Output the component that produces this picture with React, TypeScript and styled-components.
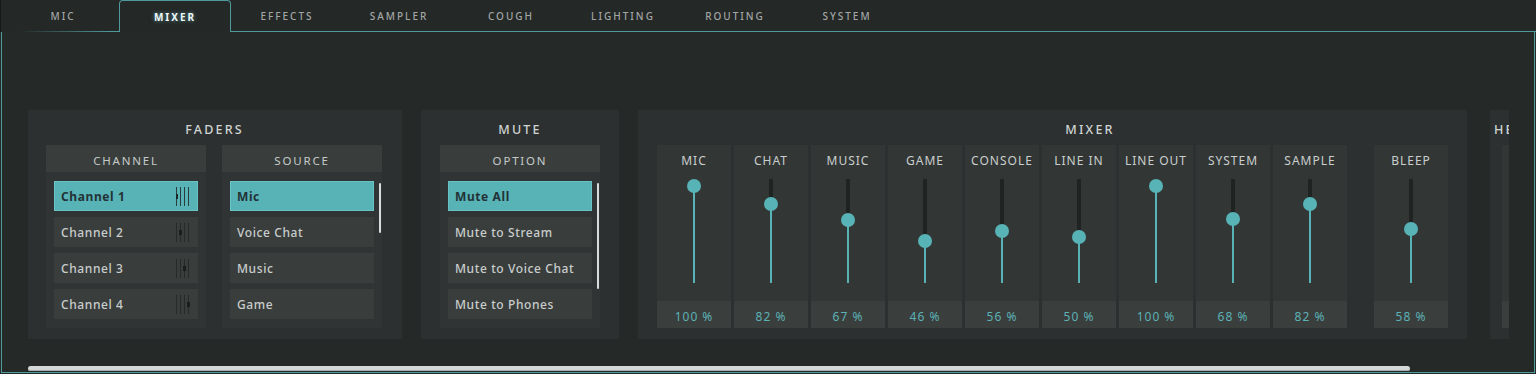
import React from "react";
import styled, { createGlobalStyle, css } from "styled-components";

const TEAL = "#58b3b7";
const LINE = "#4f9a9c";

const GlobalStyle = createGlobalStyle`
  html, body {
    margin: 0;
    padding: 0;
    background: #252928;
  }
  body {
    font-family: "Noto Sans", "DejaVu Sans", sans-serif;
  }
`;

const Root = styled.div`
  width: 1536px;
  height: 374px;
  overflow: hidden;
  background: #252928;
`;

const TabBar = styled.div`
  display: flex;
  height: 32px;
  padding-left: 6px;
  box-sizing: border-box;
  border-left: 1px solid #171a19;
  background: #242827;
`;

const Tab = styled.div<{ $active?: boolean; $fade?: boolean }>`
  width: 112px;
  height: 32px;
  box-sizing: border-box;
  display: flex;
  align-items: center;
  justify-content: center;
  padding-top: 1px;
  font-size: 10px;
  letter-spacing: 2px;
  font-weight: 500;
  color: #a2a6a5;
  border-bottom: 1px solid ${LINE};

  ${(p) =>
    p.$fade &&
    css`
      border-bottom: none;
      padding-bottom: 1px;
      background: linear-gradient(to right, transparent 10%, ${LINE} 95%) bottom / 100% 1px no-repeat;
    `}

  ${(p) =>
    p.$active &&
    css`
      border: 1px solid ${LINE};
      border-bottom: none;
      padding-bottom: 1px;
      border-radius: 4px 4px 0 0;
      color: #eef8f8;
      font-weight: 700;
      text-shadow: 0 0 4px rgba(130, 225, 230, 0.55);
    `}
`;

const TabFiller = styled.div`
  flex: 1;
  border-bottom: 1px solid ${LINE};
`;

const Frame = styled.div`
  margin-left: 1px;
  width: 1534px;
  height: 341px;
  box-sizing: border-box;
  border: 1px solid ${LINE};
  border-top: none;
  padding: 78px 0 0 26px;
`;

const Viewport = styled.div`
  width: 1481px;
  overflow: hidden;
`;

const PanelRow = styled.div`
  display: flex;
  gap: 19px;
  width: max-content;
`;

const Panel = styled.section<{ $width?: number; $offset?: number; $padLeft?: number }>`
  width: ${(p) => (p.$width ? `${p.$width}px` : "auto")};
  height: 229px;
  box-sizing: border-box;
  margin-left: ${(p) => p.$offset ?? 0}px;
  padding: 0 19px 11px ${(p) => p.$padLeft ?? 18}px;
  background: #2c3030;
  display: flex;
  flex-direction: column;
`;

const PanelTitle = styled.div<{ $shift?: number; $left?: boolean }>`
  height: 35px;
  box-sizing: border-box;
  padding-top: 4px;
  padding-left: ${(p) => p.$shift ?? 0}px;
  display: flex;
  align-items: center;
  justify-content: ${(p) => (p.$left ? "flex-start" : "center")};
  font-size: 12.5px;
  letter-spacing: 2.2px;
  font-weight: 500;
  color: #d0d4d3;
  white-space: nowrap;
`;

const Columns = styled.div`
  display: flex;
  gap: 16px;
`;

const Column = styled.div`
  width: 160px;
  height: 183px;
  display: flex;
  flex-direction: column;
`;

const ColumnHeader = styled.div`
  height: 27px;
  box-sizing: border-box;
  padding-top: 3px;
  flex-shrink: 0;
  background: #393e3d;
  display: flex;
  align-items: center;
  justify-content: center;
  font-size: 11.5px;
  letter-spacing: 1.8px;
  color: #c6cac9;
`;

const ColumnBody = styled.div`
  position: relative;
  flex: 1;
  padding: 9px 8px;
  background: #303434;
`;

const ListView = styled.div`
  height: 138px;
  overflow: hidden;
  display: flex;
  flex-direction: column;
  gap: 6px;
`;

const Item = styled.div<{ $selected?: boolean }>`
  height: 30px;
  flex-shrink: 0;
  box-sizing: border-box;
  padding: 1px 8px 0 7px;
  display: flex;
  align-items: center;
  justify-content: space-between;
  font-size: 12px;
  letter-spacing: 0.6px;
  font-weight: 500;
  color: #c9cdcc;
  background: #393e3d;

  ${(p) =>
    p.$selected &&
    css`
      background: ${TEAL};
      border: 1px solid #69c2c5;
      padding: 0 7px 0 6px;
      color: #233236;
      font-weight: 700;
    `}
`;

const ScrollThumb = styled.div`
  position: absolute;
  right: 1px;
  top: 11px;
  width: 2px;
  border-radius: 2px;
  background: #d8dbdb;
`;

const Strips = styled.div<{ $indent?: number }>`
  display: flex;
  gap: 3px;
  margin-left: ${(p) => p.$indent ?? 0}px;
`;

const Strip = styled.div<{ $apart?: boolean }>`
  width: 74px;
  height: 183px;
  margin-left: ${(p) => (p.$apart ? 24 : 0)}px;
  flex-shrink: 0;
  background: #323736;
  display: flex;
  flex-direction: column;
`;

const StripLabel = styled.div`
  height: 27px;
  box-sizing: border-box;
  padding-top: 3px;
  display: flex;
  align-items: center;
  justify-content: center;
  font-size: 12px;
  letter-spacing: 1px;
  color: #cacecd;
  white-space: nowrap;
`;

const SliderArea = styled.div`
  flex: 1;
  padding-top: 7px;
  display: flex;
  justify-content: center;
`;

const Track = styled.div`
  position: relative;
  width: 14px;
  height: 104px;
  display: flex;
  flex-direction: column;
  align-items: center;
`;

const TrackEmpty = styled.div`
  width: 4px;
  flex-shrink: 0;
  background: #1f2322;
`;

const TrackFill = styled.div`
  width: 2px;
  flex: 1;
  background: ${TEAL};
`;

const Knob = styled.div`
  position: absolute;
  left: 0;
  width: 14px;
  height: 14px;
  border-radius: 50%;
  background: ${TEAL};
`;

const ValueBox = styled.div`
  height: 27px;
  box-sizing: border-box;
  padding-top: 3px;
  display: flex;
  align-items: center;
  justify-content: center;
  background: #3a3f3e;
  font-size: 12px;
  letter-spacing: 1px;
  color: #5cb1b5;
`;

const ScrollTrack = styled.div`
  margin-top: 27px;
  width: 1481px;
  height: 5px;
`;

const ScrollBarThumb = styled.div`
  height: 5px;
  border-radius: 3px;
  background: #d6d7d7;
  box-shadow: inset 0 -1px 0 #a9acac;
`;

const tabs = ["MIC", "MIXER", "EFFECTS", "SAMPLER", "COUGH", "LIGHTING", "ROUTING", "SYSTEM"];
const channels = ["Channel 1", "Channel 2", "Channel 3", "Channel 4"];
const sources = ["Mic", "Voice Chat", "Music", "Game"];
const muteOptions = ["Mute All", "Mute to Stream", "Mute to Voice Chat", "Mute to Phones"];
const mixer = [
  { name: "MIC", value: 100 },
  { name: "CHAT", value: 82 },
  { name: "MUSIC", value: 67 },
  { name: "GAME", value: 46 },
  { name: "CONSOLE", value: 56 },
  { name: "LINE IN", value: 50 },
  { name: "LINE OUT", value: 100 },
  { name: "SYSTEM", value: 68 },
  { name: "SAMPLE", value: 82 },
];

const VIEWPORT = 1481;
const CONTENT = 1587;

function FaderIcon({ index, selected }: { index: number; selected: boolean }) {
  const line = selected ? "#2a3b3e" : "#262a2a";
  const knob = selected ? "#1b2729" : "#1b1e1e";
  return (
    <svg width="14" height="19" viewBox="0 0 14 19">
      {[0, 1, 2, 3].map((i) => (
        <rect key={i} x={i * 4} y={0} width={1} height={19} fill={line} />
      ))}
      <rect x={index * 4 - 1} y={7} width={3} height={5} fill={knob} />
    </svg>
  );
}

function ChannelStrip({ name, value, apart }: { name: string; value: number; apart?: boolean }) {
  const top = (100 - value) * 1.02;
  return (
    <Strip $apart={apart}>
      <StripLabel>{name}</StripLabel>
      <SliderArea>
        <Track>
          <TrackEmpty style={{ height: top + 7 }} />
          <TrackFill />
          <Knob style={{ top }} />
        </Track>
      </SliderArea>
      <ValueBox>{value ? `${value} %` : ""}</ValueBox>
    </Strip>
  );
}

export default function App() {
  return (
    <Root>
      <GlobalStyle />
      <TabBar>
        {tabs.map((t, i) => (
          <Tab key={t} $active={t === "MIXER"} $fade={i === 0}>
            {t}
          </Tab>
        ))}
        <TabFiller />
      </TabBar>

      <Frame>
        <Viewport>
          <PanelRow>
            <Panel $width={374}>
              <PanelTitle>FADERS</PanelTitle>
              <Columns>
                <Column>
                  <ColumnHeader>CHANNEL</ColumnHeader>
                  <ColumnBody>
                    <ListView>
                      {channels.map((c, i) => (
                        <Item key={c} $selected={i === 0}>
                          {c}
                          <FaderIcon index={i} selected={i === 0} />
                        </Item>
                      ))}
                    </ListView>
                  </ColumnBody>
                </Column>
                <Column>
                  <ColumnHeader>SOURCE</ColumnHeader>
                  <ColumnBody>
                    <ListView>
                      {sources.map((s, i) => (
                        <Item key={s} $selected={i === 0}>
                          {s}
                        </Item>
                      ))}
                    </ListView>
                    <ScrollThumb style={{ height: 50 }} />
                  </ColumnBody>
                </Column>
              </Columns>
            </Panel>

            <Panel $width={198} $padLeft={19}>
              <PanelTitle>MUTE</PanelTitle>
              <Columns>
                <Column>
                  <ColumnHeader>OPTION</ColumnHeader>
                  <ColumnBody>
                    <ListView>
                      {muteOptions.map((m, i) => (
                        <Item key={m} $selected={i === 0}>
                          {m}
                        </Item>
                      ))}
                    </ListView>
                    <ScrollThumb style={{ height: 106 }} />
                  </ColumnBody>
                </Column>
              </Columns>
            </Panel>

            <Panel $width={829} $padLeft={19}>
              <PanelTitle $shift={75}>MIXER</PanelTitle>
              <Strips>
                {mixer.map((m) => (
                  <ChannelStrip key={m.name} name={m.name} value={m.value} />
                ))}
                <ChannelStrip name="BLEEP" value={58} apart />
              </Strips>
            </Panel>

            <Panel $width={112} $offset={4} $padLeft={4}>
              <PanelTitle $left>HEADPHONES</PanelTitle>
              <Strips $indent={8}>
                <ChannelStrip name="" value={0} />
              </Strips>
            </Panel>
          </PanelRow>
        </Viewport>
        <ScrollTrack>
          <ScrollBarThumb style={{ width: Math.round((VIEWPORT * VIEWPORT) / CONTENT) }} />
        </ScrollTrack>
      </Frame>
    </Root>
  );
}
